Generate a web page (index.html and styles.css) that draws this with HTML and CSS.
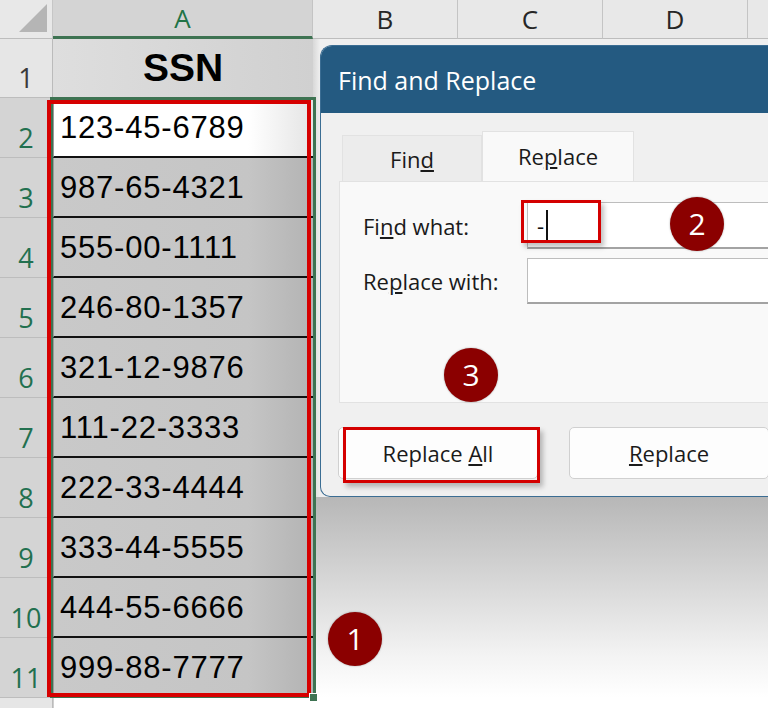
FILE: index.html
```html
<!DOCTYPE html>
<html lang="en">
<head>
<meta charset="utf-8">
<title>Find and Replace</title>
<link rel="stylesheet" href="styles.css">
</head>
<body>
<div class="sheet">
  <div class="corner">
    <svg class="tri" width="28" height="28" viewBox="0 0 28 28"><polygon points="28,0 28,28 0,28" fill="#b5b5b5"/></svg>
  </div>
  <div class="colhead sel">A</div>
  <div class="colheads">
    <div class="colhead">B</div>
    <div class="colhead">C</div>
    <div class="colhead">D</div>
    <div class="colhead last"></div>
  </div>

  <div class="rowhead plain">1</div><div class="cell head">SSN</div>
  <div class="rowhead">2</div><div class="cell active">123-45-6789</div>
  <div class="rowhead">3</div><div class="cell">987-65-4321</div>
  <div class="rowhead">4</div><div class="cell">555-00-1111</div>
  <div class="rowhead">5</div><div class="cell">246-80-1357</div>
  <div class="rowhead">6</div><div class="cell">321-12-9876</div>
  <div class="rowhead">7</div><div class="cell">111-22-3333</div>
  <div class="rowhead">8</div><div class="cell">222-33-4444</div>
  <div class="rowhead">9</div><div class="cell">333-44-5555</div>
  <div class="rowhead">10</div><div class="cell">444-55-6666</div>
  <div class="rowhead">11</div><div class="cell">999-88-7777</div>
  <div class="rowhead filler"></div><div class="cell filler"></div>

  <div class="pane">
    <div class="dialog">
      <div class="titlebar">Find and Replace</div>
      <div class="dbody">
        <div class="tabs">
          <div class="tab">Fin<u>d</u></div>
          <div class="tab active">Re<u>p</u>lace</div>
        </div>
        <div class="panel">
          <div class="field">
            <span class="label">Fi<u>n</u>d what:</span>
            <div class="input find">-<span class="caret"></span></div>
          </div>
          <div class="field second">
            <span class="label">Re<u>p</u>lace with:</span>
            <div class="input"></div>
          </div>
        </div>
        <div class="buttons">
          <button class="btn">Replace <u>A</u>ll</button>
          <button class="btn"><u>R</u>eplace</button>
        </div>
      </div>
      <span class="mark mark-find"></span>
      <span class="mark mark-all"></span>
      <span class="badge badge-2">2</span>
      <span class="badge badge-3">3</span>
    </div>
    <div class="shadow">
      <span class="badge badge-1">1</span>
    </div>
  </div>
</div>
<div class="selection"></div>
<div class="redbox"></div>
<div class="handle"></div>
</body>
</html>
```
FILE: styles.css
```css
* { box-sizing: border-box; }
html, body { margin: 0; padding: 0; }
body {
  width: 768px;
  height: 708px;
  overflow: hidden;
  position: relative;
  background: #ffffff;
  font-family: "Open Sans", "Noto Sans", sans-serif;
}

.sheet {
  display: grid;
  grid-template-columns: 53px 260px 455px;
  grid-template-rows: 39px 59px repeat(10, 60px) 10px;
  height: 708px;
}

.corner {
  background: #e8e8e8;
  border-right: 1px solid #c6c6c6;
  border-bottom: 1px solid #bdbdbd;
  display: flex;
  align-items: flex-end;
  justify-content: flex-end;
  padding: 0 5px 6px 0;
}

.colheads { display: flex; }
.colhead {
  display: flex;
  align-items: center;
  justify-content: center;
  font-size: 26px;
  color: #262626;
  background: #e8e8e8;
  border-right: 1px solid #c4c4c4;
  border-bottom: 1px solid #bdbdbd;
  line-height: 1;
}
.colheads .colhead { width: 145px; flex: none; }
.colheads .colhead.last { flex: 1; width: auto; border-right: none; }
.colhead.sel {
  background: #d4d4d4;
  color: #217346;
  border-bottom: 3px solid #3e7352;
}

.rowhead {
  display: flex;
  align-items: flex-end;
  justify-content: center;
  padding-bottom: 6px;
  font-size: 27px;
  line-height: 1;
  color: #22704f;
  background: #d4d4d4;
  border-right: 1px solid #bbbbbb;
  border-bottom: 1px solid #bdbdbd;
}
.rowhead.plain { background: #e6e6e6; color: #3a3a3a; }
.rowhead.filler { background: #e6e6e6; border-bottom: none; }

.cell {
  display: flex;
  align-items: center;
  padding-left: 6px;
  padding-top: 2px;
  font-family: "Liberation Sans", Arial, sans-serif;
  font-size: 31px;
  letter-spacing: 0.8px;
  color: #000;
  background: linear-gradient(to right, #c9c9c9 0%, #c5c5c5 75%, #b3b3b3 100%);
  border-bottom: 2px solid #111;
  border-left: 1px solid #9a9a9a;
}
.cell.head {
  justify-content: center;
  padding-left: 0;
  padding-top: 0;
  font-weight: bold;
  font-size: 39px;
  letter-spacing: 0;
  background: linear-gradient(to right, #dedede, #d0d0d0);
  border-bottom: 1px solid #8a8a8a;
  border-left: none;
}
.cell.active { background: linear-gradient(to right, #ffffff 75%, #e4e4e4 100%); }
.cell.filler { background: #ffffff; border-bottom: none; border-left: 1px solid #cfcfcf; }

/* Right side: dialog over the sheet */
.pane {
  grid-column: 3;
  grid-row: 2 / 14;
  display: flex;
  flex-direction: column;
  padding: 6px 0 0 7px;
  background: linear-gradient(to right, #d8d8d8 0, #efefef 7px);
  overflow: hidden;
}

.dialog {
  position: relative;
  flex: none;
  width: 520px;
  height: 452px;
  background: #f0f0f0;
  border: 1px solid #3b6d93;
  border-right: none;
  border-radius: 12px 0 0 10px;
  overflow: hidden;
}

.titlebar {
  height: 67px;
  background: #245a81;
  color: #ffffff;
  font-size: 25px;
  padding-left: 17px;
  display: flex;
  align-items: center;
}

.dbody { padding: 18px 0 0 18px; }

.tabs {
  display: flex;
  align-items: flex-end;
  height: 50px;
  margin-left: 3px;
}
.tab {
  width: 140px;
  height: 46px;
  background: #ececec;
  border: 1px solid #e2e2e2;
  border-bottom: none;
  display: flex;
  align-items: center;
  justify-content: center;
  font-size: 22px;
  color: #1a1a1a;
}
.tab.active {
  width: 152px;
  height: 50px;
  background: #f9f9f9;
  padding-bottom: 2px;
}

.panel {
  height: 222px;
  background: #f9f9f9;
  border: 1px solid #e2e2e2;
  border-right: none;
  padding: 20px 0 0 23px;
}
.field {
  display: flex;
  align-items: center;
  height: 47px;
}
.field.second { height: 46px; margin-top: 9px; }
.label {
  width: 164px;
  flex: none;
  font-size: 22px;
  color: #1a1a1a;
}
.input {
  flex: 1;
  align-self: stretch;
  background: #ffffff;
  border: 1px solid #bdbdbd;
  border-bottom: 2px solid #a3a3a3;
  border-right: none;
  display: flex;
  align-items: center;
  padding-left: 9px;
  font-size: 22px;
  color: #111;
}
.caret {
  display: inline-block;
  width: 2px;
  height: 31px;
  background: #111;
  margin-left: 2px;
}

.buttons {
  display: flex;
  gap: 31px;
  margin-top: 24px;
  margin-left: -1px;
}
.btn {
  width: 200px;
  height: 52px;
  flex: none;
  background: #fdfdfd;
  border: 1px solid #d0d0d0;
  border-radius: 5px;
  font-family: "Open Sans", "Noto Sans", sans-serif;
  font-size: 22px;
  color: #1a1a1a;
  padding: 0;
}

/* Annotation overlays */
.mark {
  position: absolute;
  border: 3px solid #d40000;
  box-shadow: 3px 4px 5px rgba(0, 0, 0, 0.25);
}
.mark-find { left: 200px; top: 154px; width: 80px; height: 43px; }
.mark-all { left: 22px; top: 381px; width: 197px; height: 56px; }

.badge {
  width: 54px;
  height: 54px;
  border-radius: 50%;
  background: #8b0000;
  color: #ffffff;
  font-size: 30px;
  line-height: 1;
  display: flex;
  align-items: center;
  justify-content: center;
  box-shadow: 0 0 2px rgba(0, 0, 0, 0.35);
}
.dialog .badge { position: absolute; }
.badge-2 { left: 349px; top: 151px; }
.badge-3 { left: 123px; top: 302px; }

.shadow {
  flex: 1;
  margin-left: -7px;
  background: linear-gradient(to bottom, #b7b7b7 0%, #d3d3d3 35%, #f3f3f3 75%, #ffffff 95%);
  padding: 115px 0 0 15px;
}

.selection {
  position: absolute;
  left: 50px;
  top: 97px;
  width: 266px;
  height: 601px;
  border: 3px solid #3e7352;
}
.redbox {
  position: absolute;
  left: 47px;
  top: 100px;
  width: 264px;
  height: 597px;
  border: 4px solid #d60000;
}
.handle {
  position: absolute;
  left: 309px;
  top: 693px;
  width: 9px;
  height: 9px;
  background: #3e7352;
  border: 1px solid #ffffff;
}
```
